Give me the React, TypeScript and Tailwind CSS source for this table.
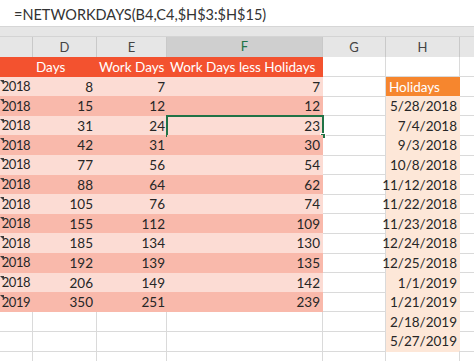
import React from "react";

const cols = "grid grid-cols-[33px_64px_70px_156px_63px_74px_1fr]";

const rows: [number, number, number, number][] = [
  [2018, 8, 7, 7],
  [2018, 15, 12, 12],
  [2018, 31, 24, 23],
  [2018, 42, 31, 30],
  [2018, 77, 56, 54],
  [2018, 88, 64, 62],
  [2018, 105, 76, 74],
  [2018, 155, 112, 109],
  [2018, 185, 134, 130],
  [2018, 192, 139, 135],
  [2018, 206, 149, 142],
  [2019, 350, 251, 239],
];

const holidays = [
  "5/28/2018",
  "7/4/2018",
  "9/3/2018",
  "10/8/2018",
  "11/12/2018",
  "11/22/2018",
  "11/23/2018",
  "12/24/2018",
  "12/25/2018",
  "1/1/2019",
  "1/21/2019",
  "2/18/2019",
  "5/27/2019",
];

const grid = "border-b border-r border-[#dadada]";

function Num({ v, band, pr = "pr-[3px]" }: { v: React.ReactNode; band: string; pr?: string }) {
  return <div className={`${band} ${pr} flex items-center justify-end`}>{v}</div>;
}

export default function App() {
  const bodyRows = 15;

  return (
    <div className="w-[474px] h-[361px] overflow-hidden bg-white text-[13.5px] text-[#262626] font-['Lato','Liberation_Sans',sans-serif]">
      {/* formula bar */}
      <div className="h-[27px] border-b border-[#d6d6d6] bg-white flex items-center pl-[14px] pt-[3px] text-[14.5px] text-[#333]">
        =NETWORKDAYS(B4,C4,$H$3:$H$15)
      </div>
      <div className="h-[10px] bg-[#e6e6e6] border-b border-[#d4d4d4]" />

      {/* column letters */}
      <div className={`${cols} h-[20px] bg-[#e6e6e6] text-[#444] text-[13px]`}>
        <div className="border-r border-[#c9c9c9]" />
        {["D", "E"].map((c) => (
          <div key={c} className="border-r border-[#c9c9c9] flex items-center justify-center">
            {c}
          </div>
        ))}
        <div className="bg-[#cfcfcf] border-b-2 border-[#217346] border-r border-r-[#c9c9c9] flex items-center justify-center text-[#217346]">
          F
        </div>
        {["G", "H"].map((c) => (
          <div key={c} className="border-r border-[#c9c9c9] flex items-center justify-center">
            {c}
          </div>
        ))}
        <div />
      </div>

      {/* table header row */}
      <div className={`${cols} h-[19.6px]`}>
        <div className="bg-[#f3522f]" />
        <div className="bg-[#f3522f] text-white flex items-center pl-[3px]">Days</div>
        <div className="bg-[#f3522f] text-white flex items-center pl-[2px]">Work Days</div>
        <div className="bg-[#f3522f] text-white flex items-center pl-[3px]">Work Days less Holidays</div>
        <div className={grid} />
        <div className={grid} />
        <div className="border-b border-[#dadada]" />
      </div>

      {Array.from({ length: bodyRows }).map((_, i) => {
        const r = rows[i];
        const band = i % 2 === 0 ? "bg-[#fcdcd4]" : "bg-[#f9b9ab]";
        const h =
          i === 0 ? (
            <div className="bg-[#f6862e] text-white flex items-center pl-[3px]">Holidays</div>
          ) : holidays[i - 1] ? (
            <div className="bg-[#fde7d8] flex items-center justify-end pr-[3px]">{holidays[i - 1]}</div>
          ) : (
            <div className={grid} />
          );

        return (
          <div key={i} className={`${cols} h-[19.6px]`}>
            {r ? (
              <>
                {/* year column, date cut at the left edge of the sheet */}
                <div className={`${band} relative flex items-center justify-end pr-[3px] text-[13px] tracking-[-0.5px]`}>
                  {r[0]}
                  <span className="absolute left-0 top-[3px] w-0 h-0 border-t-[4px] border-l-[4px] border-l-transparent border-t-[#3a3a3a]" />
                </div>
                <Num band={band} v={r[1]} pr="pr-[4px]" />
                <Num band={band} v={r[2]} pr="pr-[2px]" />
                <div className={`${band} relative flex items-center justify-end pr-[3px]`}>
                  {r[3]}
                  {i === 2 && (
                    <>
                      <div className="absolute -left-px -top-px -right-px -bottom-px border-2 border-[#217346]" />
                      <div className="absolute -right-[3px] -bottom-[3px] w-[6px] h-[6px] bg-[#217346] border border-white" />
                    </>
                  )}
                </div>
              </>
            ) : (
              <>
                <div className={grid} />
                <div className={grid} />
                <div className={grid} />
                <div className={grid} />
              </>
            )}
            <div className={grid} />
            {h}
            <div className="border-b border-[#dadada]" />
          </div>
        );
      })}
    </div>
  );
}
